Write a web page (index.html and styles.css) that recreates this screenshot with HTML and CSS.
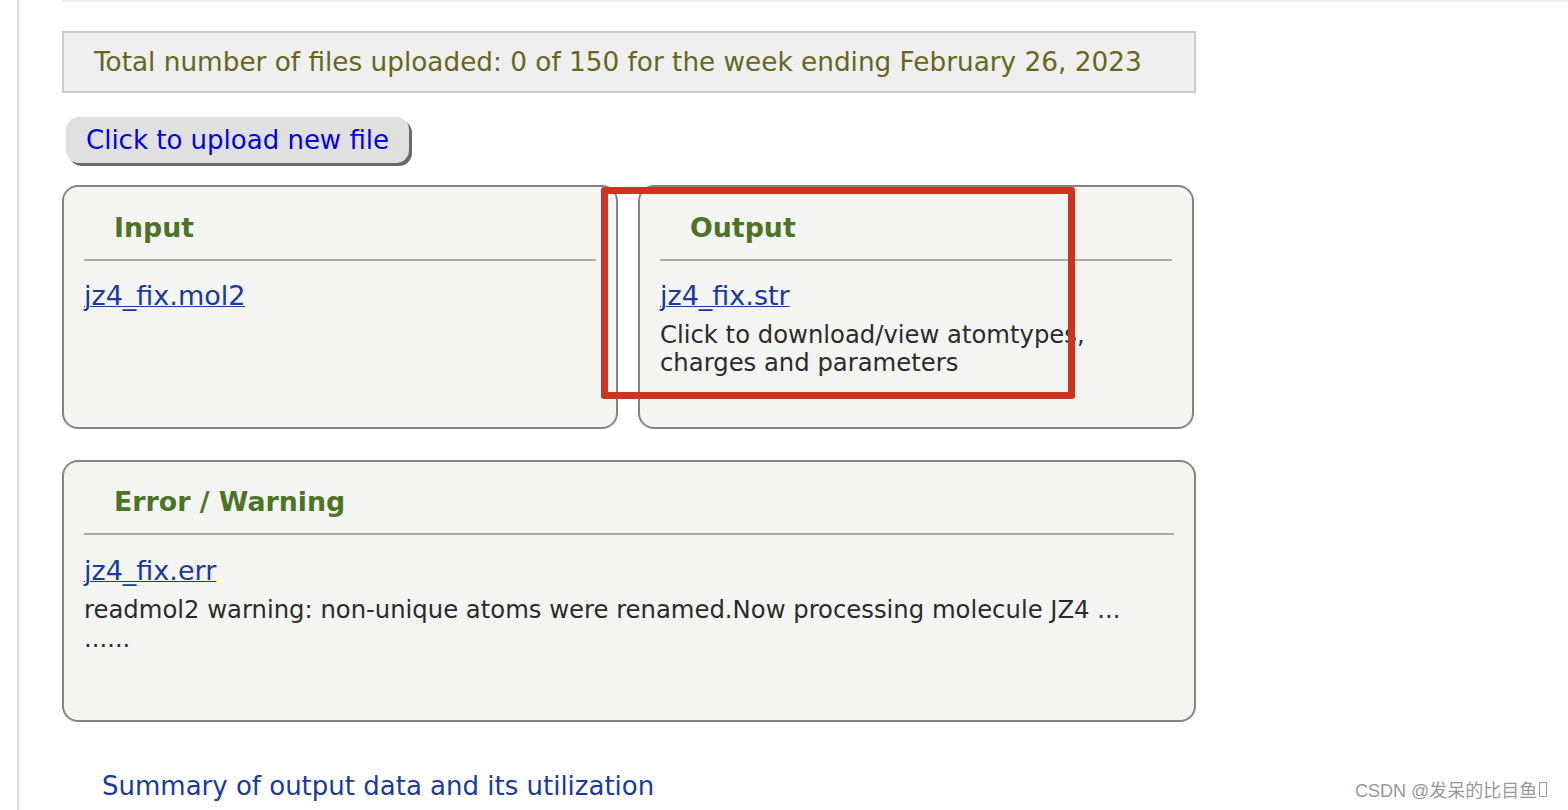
FILE: index.html
```html
<!DOCTYPE html>
<html>
<head>
<meta charset="utf-8">
<link rel="stylesheet" href="styles.css">
</head>
<body>
<div class="page">
  <div class="content">
    <div class="info">Total number of files uploaded: 0 of 150 for the week ending February 26, 2023</div>
    <a class="upload-btn" href="#">Click to upload new file</a>
    <div class="row">
      <div class="panel">
        <h3 class="panel-title">Input</h3>
        <div class="rule"></div>
        <a class="file-link" href="#">jz4_fix.mol2</a>
      </div>
      <div class="panel">
        <h3 class="panel-title">Output</h3>
        <div class="rule"></div>
        <a class="file-link" href="#">jz4_fix.str</a>
        <p class="desc">Click to download/view atomtypes,<br>charges and parameters</p>
      </div>
    </div>
    <div class="panel panel-wide">
      <h3 class="panel-title">Error / Warning</h3>
      <div class="rule"></div>
      <a class="file-link" href="#">jz4_fix.err</a>
      <p class="desc">readmol2 warning: non-unique atoms were renamed.Now processing molecule JZ4 ...<br>......</p>
    </div>
    <a class="summary" href="#">Summary of output data and its utilization</a>
  </div>
  <div class="highlight"></div>
  <div class="watermark">CSDN @发呆的比目鱼<span class="tofu"></span></div>
</div>
</body>
</html>
```
FILE: styles.css
```css
html, body {
  margin: 0;
  padding: 0;
  background: #fff;
}
body {
  font-family: "DejaVu Sans", Verdana, sans-serif;
  padding-left: 17px;
  height: 810px;
  overflow: hidden;
}
.page {
  position: relative;
  border-left: 2px solid #dcdcdc;
  height: 810px;
}
.content {
  margin-left: 43px;
  border-top: 2px solid #eeeeea;
  width: 1507px;
  padding-top: 29px;
}
.info {
  box-sizing: border-box;
  width: 1134px;
  height: 62px;
  border: 2px solid #cccccc;
  background: #efefef;
  color: #66661f;
  font-size: 26.3px;
  line-height: 58px;
  padding-left: 30px;
  white-space: nowrap;
}
.upload-btn {
  display: block;
  box-sizing: border-box;
  width: 343px;
  height: 46px;
  margin: 24px 0 0 4px;
  background: #e0e0e0;
  border-radius: 13px;
  box-shadow: 3px 3px 0 #6a6a6a;
  color: #0000ee;
  text-decoration: none;
  font-size: 26px;
  line-height: 47px;
  padding-left: 20px;
  white-space: nowrap;
}
.row {
  display: flex;
  gap: 20px;
  margin-top: 22px;
  width: 1132px;
}
.panel {
  box-sizing: border-box;
  width: 556px;
  height: 244px;
  border: 2px solid #858585;
  border-radius: 16px;
  background: #f4f5f3;
  padding: 0 20px;
}
.panel-wide {
  width: 1134px;
  height: 262px;
  margin-top: 31px;
}
.panel-title {
  margin: 27px 0 0 30px;
  font-size: 26.8px;
  line-height: 28px;
  font-weight: bold;
  color: #4d7326;
  white-space: nowrap;
}
.panel-wide .panel-title {
  margin-top: 26px;
}
.rule {
  height: 2px;
  background: #aaaaaa;
  margin-top: 17px;
}
.file-link {
  display: block;
  margin-top: 21px;
  font-size: 27px;
  line-height: 28px;
  color: #1a3a9c;
  text-decoration: underline;
  text-decoration-thickness: 1px;
}
.panel-wide .file-link {
  margin-top: 22px;
}
.desc {
  margin: 11px 0 0 0;
  font-size: 24.3px;
  line-height: 28px;
  color: #2b2b2b;
  white-space: nowrap;
}
.panel-wide .desc {
  line-height: 29px;
  margin-top: 10px;
}
.summary {
  display: block;
  margin: 50px 0 0 40px;
  font-size: 26px;
  line-height: 28px;
  color: #1a3a9c;
  text-decoration: none;
  white-space: nowrap;
}
.highlight {
  position: absolute;
  left: 582px;
  top: 187px;
  width: 460px;
  height: 198px;
  border: 7px solid #cc3322;
  border-radius: 3px;
}
.watermark {
  position: absolute;
  left: 1336px;
  top: 780px;
  font-family: "Liberation Sans", "Noto Sans CJK SC", sans-serif;
  font-size: 18px;
  line-height: 22px;
  color: #999999;
  white-space: nowrap;
}
.tofu {
  display: inline-block;
  width: 6px;
  height: 13px;
  border: 1px solid #999;
  margin-left: 2px;
}
```
